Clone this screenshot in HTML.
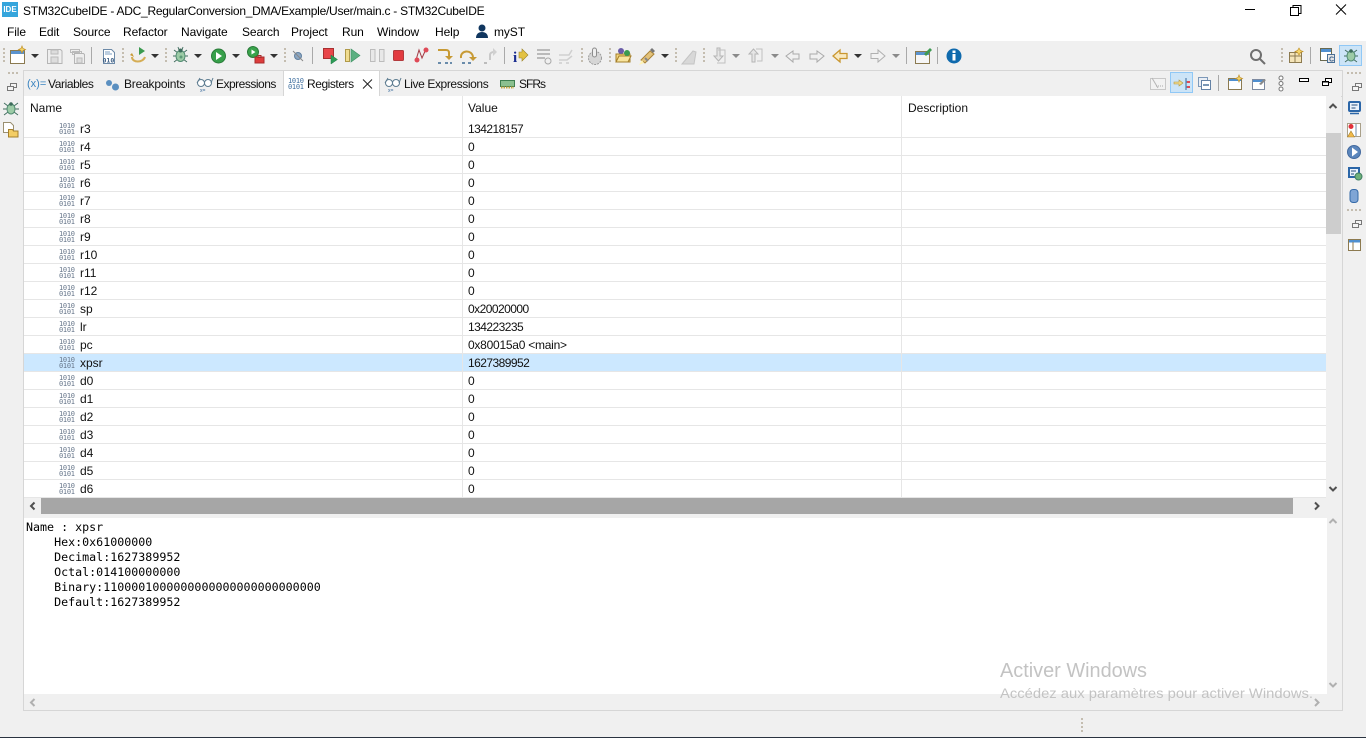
<!DOCTYPE html>
<html><head><meta charset="utf-8"><title>STM32CubeIDE</title>
<style>
html,body{margin:0;padding:0;width:1366px;height:738px;overflow:hidden;background:#f0f0f0;font:12px "Liberation Sans",sans-serif;color:#111}
.a{position:absolute;white-space:nowrap}
#title{left:0;top:0;width:1366px;height:20px;background:#fff}
#menu{left:0;top:20px;width:1366px;height:21px;background:#fff}
.m{position:absolute;top:24px;line-height:16px;color:#000;letter-spacing:-.1px}
#tabs{left:24px;top:70px;width:1318px;height:25px;background:#f0f0f0;border-top:1px solid #d6d6d6;border-bottom:1px solid #d6d6d6;box-sizing:content-box}
#tree{left:24px;top:96px;width:1302px;height:402px;background:#fff;overflow:hidden}
.r{position:absolute;left:0;width:1302px;height:17px;border-bottom:1px solid #e6e6e6;line-height:18px}
.r.s{background:#cce8ff;border-bottom-color:#e6e6e6}
.n{position:absolute;left:56px;top:0}
.v{position:absolute;left:444px;top:0;letter-spacing:-.55px}
.b{position:absolute;left:35px;top:2.500px;width:16px;font:7px/6px "DejaVu Sans Mono",monospace;color:#66768a;letter-spacing:-.3px;white-space:pre}
.t{position:absolute;top:76px;line-height:16px;color:#111;letter-spacing:-.4px}
#detail{left:24px;top:518px;width:1303px;height:176px;background:#fff}
#mono{left:26px;top:520px;font:11.66px/15px "DejaVu Sans Mono",monospace;color:#000;white-space:pre}
</style></head><body>
<div class="a" id="title"></div>
<div class="a" id="menu"></div>
<div class="a" style="left:23px;top:3px;line-height:16px;color:#000;letter-spacing:-.26px">STM32CubeIDE - ADC_RegularConversion_DMA/Example/User/main.c - STM32CubeIDE</div>
<div class="a" style="left:2px;top:2px;width:16px;height:15px;background:#35a5dc;color:#fff;font:bold 8px/15px 'Liberation Sans',sans-serif;text-align:center">IDE</div>
<span class="m" style="left:7px">File</span><span class="m" style="left:39px">Edit</span><span class="m" style="left:73px">Source</span><span class="m" style="left:123px">Refactor</span><span class="m" style="left:181px">Navigate</span><span class="m" style="left:242px">Search</span><span class="m" style="left:291px">Project</span><span class="m" style="left:342px">Run</span><span class="m" style="left:377px">Window</span><span class="m" style="left:435px">Help</span><span class="m" style="left:494px">myST</span>

<div class="a" id="tabs"></div>
<div class="a" style="left:283px;top:71px;width:97px;height:25px;background:#fff;border-left:1px solid #d6d6d6;border-right:1px solid #d6d6d6;box-sizing:border-box"></div>
<span class="t" style="left:48px">Variables</span><span class="a" style="left:27px;top:76px;line-height:16px;color:#3a84c0;font-size:11px">(x)=</span>
<span class="t" style="left:124px;letter-spacing:-.2px">Breakpoints</span><span class="t" style="left:216px;letter-spacing:-.5px">Expressions</span><span class="t" style="left:307px;letter-spacing:-.45px">Registers</span><span class="t" style="left:404px">Live Expressions</span><span class="t" style="left:519px;letter-spacing:-1px;font-size:12px">SFRs</span>
<div class="b" style="left:288px;top:78px;position:absolute;color:#3f6f9f">1010
0101</div>

<div class="a" id="tree">
<span class="a" style="left:6px;top:4px;line-height:16px">Name</span><span class="a" style="left:444px;top:4px;line-height:16px">Value</span><span class="a" style="left:884px;top:4px;line-height:16px">Description</span>
<div class="r" style="top:24px"><span class="b">1010
0101</span><span class="n">r3</span><span class="v">134218157</span></div>
<div class="r" style="top:42px"><span class="b">1010
0101</span><span class="n">r4</span><span class="v">0</span></div>
<div class="r" style="top:60px"><span class="b">1010
0101</span><span class="n">r5</span><span class="v">0</span></div>
<div class="r" style="top:78px"><span class="b">1010
0101</span><span class="n">r6</span><span class="v">0</span></div>
<div class="r" style="top:96px"><span class="b">1010
0101</span><span class="n">r7</span><span class="v">0</span></div>
<div class="r" style="top:114px"><span class="b">1010
0101</span><span class="n">r8</span><span class="v">0</span></div>
<div class="r" style="top:132px"><span class="b">1010
0101</span><span class="n">r9</span><span class="v">0</span></div>
<div class="r" style="top:150px"><span class="b">1010
0101</span><span class="n">r10</span><span class="v">0</span></div>
<div class="r" style="top:168px"><span class="b">1010
0101</span><span class="n">r11</span><span class="v">0</span></div>
<div class="r" style="top:186px"><span class="b">1010
0101</span><span class="n">r12</span><span class="v">0</span></div>
<div class="r" style="top:204px"><span class="b">1010
0101</span><span class="n">sp</span><span class="v">0x20020000</span></div>
<div class="r" style="top:222px"><span class="b">1010
0101</span><span class="n">lr</span><span class="v">134223235</span></div>
<div class="r" style="top:240px"><span class="b">1010
0101</span><span class="n">pc</span><span class="v" style="letter-spacing:-.25px">0x80015a0 &lt;main&gt;</span></div>
<div class="r s" style="top:258px"><span class="b">1010
0101</span><span class="n">xpsr</span><span class="v">1627389952</span></div>
<div class="r" style="top:276px"><span class="b">1010
0101</span><span class="n">d0</span><span class="v">0</span></div>
<div class="r" style="top:294px"><span class="b">1010
0101</span><span class="n">d1</span><span class="v">0</span></div>
<div class="r" style="top:312px"><span class="b">1010
0101</span><span class="n">d2</span><span class="v">0</span></div>
<div class="r" style="top:330px"><span class="b">1010
0101</span><span class="n">d3</span><span class="v">0</span></div>
<div class="r" style="top:348px"><span class="b">1010
0101</span><span class="n">d4</span><span class="v">0</span></div>
<div class="r" style="top:366px"><span class="b">1010
0101</span><span class="n">d5</span><span class="v">0</span></div>
<div class="r" style="top:384px"><span class="b">1010
0101</span><span class="n">d6</span><span class="v">0</span></div>
<div class="a" style="left:438px;top:0;width:1px;height:402px;background:#e6e6e6"></div>
<div class="a" style="left:877px;top:0;width:1px;height:402px;background:#e6e6e6"></div>
</div>

<!-- scrollbars -->
<div class="a" style="left:1326px;top:96px;width:15px;height:402px;background:#f0f0f0"></div>
<div class="a" style="left:1326px;top:133px;width:15px;height:101px;background:#cdcdcd"></div>
<div class="a" style="left:24px;top:498px;width:1318px;height:16px;background:#f0f0f0"></div>
<div class="a" style="left:41px;top:498px;width:1252px;height:16px;background:#a6a6a6"></div>
<div class="a" style="left:24px;top:514px;width:1318px;height:4px;background:#f0f0f0"></div>
<div class="a" id="detail"></div>
<div class="a" id="mono">Name : xpsr
    Hex:0x61000000
    Decimal:1627389952
    Octal:014100000000
    Binary:1100001000000000000000000000000
    Default:1627389952</div>
<div class="a" style="left:1342px;top:70px;width:1px;height:641px;background:#d6d6d6"></div>
<div class="a" style="left:23px;top:70px;width:1px;height:641px;background:#d6d6d6"></div>
<div class="a" style="left:23px;top:710px;width:1320px;height:1px;background:#d6d6d6"></div>
<div class="a" style="left:0;top:737px;width:1366px;height:1px;background:#2a3340"></div>

<svg class="a" style="left:0;top:0" width="1366" height="738" viewBox="0 0 1366 738" fill="none">
<!-- window controls -->
<path d="M1245 9.5h10" stroke="#000"/>
<path d="M1290.500 7.500h8v8h-8zM1293 7.500V5.500h8v8h-2.500" stroke="#000"/>
<path d="M1336 4.500l10 10M1346 4.500l-10 10" stroke="#000"/>
<!-- myST person -->
<circle cx="482" cy="28" r="3.500" fill="#10365f"/><path d="M476 38c0-4 2.500-6 6-6s6 2 6 6z" fill="#10365f"/>

<!-- grips -->
<g fill="#c4bdb0">
<rect x="3" y="48" width="2" height="2"/><rect x="3" y="52" width="2" height="2"/><rect x="3" y="56" width="2" height="2"/><rect x="3" y="60" width="2" height="2"/>
<rect x="122" y="48" width="2" height="2"/><rect x="122" y="52" width="2" height="2"/><rect x="122" y="56" width="2" height="2"/><rect x="122" y="60" width="2" height="2"/>
<rect x="165" y="48" width="2" height="2"/><rect x="165" y="52" width="2" height="2"/><rect x="165" y="56" width="2" height="2"/><rect x="165" y="60" width="2" height="2"/>
<rect x="284" y="48" width="2" height="2"/><rect x="284" y="52" width="2" height="2"/><rect x="284" y="56" width="2" height="2"/><rect x="284" y="60" width="2" height="2"/>
<rect x="581" y="48" width="2" height="2"/><rect x="581" y="52" width="2" height="2"/><rect x="581" y="56" width="2" height="2"/><rect x="581" y="60" width="2" height="2"/>
<rect x="609" y="48" width="2" height="2"/><rect x="609" y="52" width="2" height="2"/><rect x="609" y="56" width="2" height="2"/><rect x="609" y="60" width="2" height="2"/>
<rect x="675" y="48" width="2" height="2"/><rect x="675" y="52" width="2" height="2"/><rect x="675" y="56" width="2" height="2"/><rect x="675" y="60" width="2" height="2"/>
<rect x="703" y="48" width="2" height="2"/><rect x="703" y="52" width="2" height="2"/><rect x="703" y="56" width="2" height="2"/><rect x="703" y="60" width="2" height="2"/>
<rect x="1281" y="48" width="2" height="2"/><rect x="1281" y="52" width="2" height="2"/><rect x="1281" y="56" width="2" height="2"/><rect x="1281" y="60" width="2" height="2"/>
<rect x="8" y="72" width="2" height="2"/><rect x="12" y="72" width="2" height="2"/><rect x="16" y="72" width="2" height="2"/>
<rect x="1347" y="72" width="2" height="2"/><rect x="1351" y="72" width="2" height="2"/><rect x="1355" y="72" width="2" height="2"/><rect x="1359" y="72" width="2" height="2"/>
<rect x="1347" y="209" width="2" height="2"/><rect x="1351" y="209" width="2" height="2"/><rect x="1355" y="209" width="2" height="2"/><rect x="1359" y="209" width="2" height="2"/>
<rect x="1081" y="718" width="2" height="2"/><rect x="1081" y="722" width="2" height="2"/><rect x="1081" y="726" width="2" height="2"/><rect x="1081" y="730" width="2" height="2"/>
</g>
<!-- separators -->
<g stroke="#a9a9a9"><path d="M91.500 47v17M312.500 47v17M504.500 47v17M906.500 47v17M937.500 47v17M1310.500 47v17M1218.500 75v16"/></g>
<!-- dropdown arrows -->
<g fill="#333"><path d="M31 54h8l-4 4zM151 54h8l-4 4zM194 54h8l-4 4zM232 54h8l-4 4zM270 54h8l-4 4zM661 54h8l-4 4zM854 54h8l-4 4z"/></g>
<g fill="#8a8a8a"><path d="M732 54h8l-4 4zM771 54h8l-4 4zM892 54h8l-4 4z"/></g>

<!-- new -->
<rect x="10.500" y="50.500" width="14" height="13" fill="#fff" stroke="#8b7a50"/><rect x="11" y="51" width="13" height="3" fill="#5b93cf"/><path d="M22 46l1 2.500 2.500 1-2.500 1-1 2.500-1-2.500-2.500-1 2.500-1z" fill="#f5d56a" stroke="#c2932a" stroke-width=".7"/>
<!-- save / save all -->
<path d="M47.500 49.500h13l1.500 1.500v12.500h-14.500z" fill="#eee" stroke="#b5b5b5"/><rect x="51" y="50" width="7" height="4" fill="#ddd" stroke="#bbb"/><rect x="51" y="57" width="7" height="6" fill="#ddd" stroke="#bbb"/>
<path d="M70.500 49.500h9v3h-9zM72.500 51.500h9v3h-9z" fill="#eee" stroke="#bbb"/><path d="M74.500 53.500h9l1 1v9h-10z" fill="#eee" stroke="#b5b5b5"/><rect x="77" y="58" width="5" height="5" fill="#ddd" stroke="#bbb"/>
<!-- binary file -->
<path d="M103.500 49.500h8l3 3v11h-11z" fill="#fff" stroke="#6d8aa8"/><path d="M105 52h5M105 54h7" stroke="#7a9cc0"/><text x="102.500" y="62.500" font-family="DejaVu Sans Mono,monospace" font-size="6.500" font-weight="bold" fill="#3e5f85">010</text>
<!-- debug-config icon -->
<path d="M132 57c0 6 11 6 13 0" stroke="#d5ad55" stroke-width="2"/><path d="M130 55l2-2 2 4z" fill="#c89a35"/><path d="M139 47v8l6-4z" fill="#3a9a4f"/>
<!-- bug -->
<g stroke="#3f6b5d" stroke-width=".9"><path d="M174 50l4 3M187 50l-4 3M173 56h5M188 56h-5M174 62l4-3M187 62l-4-3M178 47l1 3M183 47l-1 3"/></g><ellipse cx="180.500" cy="56" rx="4.500" ry="5.500" fill="#9ccba6" stroke="#4f8a70"/><circle cx="180.500" cy="50.500" r="2" fill="#3d6c5c"/><circle cx="181" cy="57" r="1.500" fill="#5e9a78"/>
<!-- run -->
<circle cx="218.500" cy="56" r="7" fill="#37a04a" stroke="#2a7b3a"/><path d="M216 52v8l6-4z" fill="#fff"/>
<!-- external tools -->
<circle cx="253" cy="52" r="5.500" fill="#3aa34c" stroke="#2a7b3a"/><path d="M251.500 49.500v5l4-2.500z" fill="#fff"/><rect x="255" y="57" width="9" height="6" fill="#dd3c3c" stroke="#a92b2b"/><rect x="258" y="55.500" width="3" height="2" stroke="#a92b2b"/>
<!-- skip bp -->
<circle cx="298" cy="56" r="3.500" fill="#8ba6c2" stroke="#5f7f9f"/><path d="M293 51l10 10" stroke="#888"/>
<!-- restart -->
<rect x="323.500" y="48.500" width="10" height="10" fill="#e8464a" stroke="#a83030"/><path d="M331 55v9l6.500-4.500z" fill="#2e9b57" stroke="#1f7c44" stroke-width=".5"/>
<!-- resume -->
<rect x="345.500" y="49.500" width="4" height="12" fill="#f0dc90" stroke="#b09a4a"/><path d="M351 49v13l9-6.500z" fill="#5bb081" stroke="#3f9163" stroke-width=".6"/>
<!-- suspend -->
<rect x="370.500" y="49.500" width="4.500" height="12" fill="#e8e8e8" stroke="#bcbcbc"/><rect x="379.500" y="49.500" width="4.500" height="12" fill="#e8e8e8" stroke="#bcbcbc"/>
<!-- terminate -->
<rect x="393.500" y="50.500" width="10" height="10" rx="1" fill="#e23b40" stroke="#b33a3d"/>
<!-- disconnect -->
<path d="M416 60l3-10 3 8 4-9" stroke="#a33b45"/><circle cx="417" cy="60" r="2.500" fill="#df4a57"/><circle cx="426" cy="50" r="2.500" fill="#df4a57"/>
<!-- step into -->
<path d="M438 50h8c3 0 3 2 3 3v4" stroke="#c79a35" stroke-width="2"/><path d="M445 56h8l-4 4z" fill="#c79a35"/><path d="M438 63h3M445 63h3M450 63h2" stroke="#3d6a94" stroke-width="1.500"/>
<!-- step over -->
<path d="M461 58c-1-8 11-9 12-1" stroke="#c79a35" stroke-width="2"/><path d="M469 57h8l-4 4z" fill="#c79a35"/><path d="M462 63h3M468 63h3" stroke="#3d6a94" stroke-width="1.500"/>
<!-- step return -->
<path d="M490 60v-5c0-2 2-3 4-3" stroke="#c9c9c9" stroke-width="2"/><path d="M493 48l4 4-4 4z" fill="#d0d0d0"/><path d="M484 63h3" stroke="#aaa" stroke-width="1.500"/>
<!-- instruction step -->
<text x="513" y="62" font-family="Liberation Serif,serif" font-weight="bold" font-size="15" fill="#1a2c8f">i</text><path d="M519 52h3v-3l6 6-6 6v-3h-3z" fill="#e3c243" stroke="#9d8325" stroke-width=".6"/>
<path d="M537 50h13M537 54h13M537 58h8" stroke="#a8a8a8" stroke-width="1.500"/><circle cx="548" cy="61" r="3" stroke="#a8a8a8"/>
<path d="M559 55h10l3-5M559 60h8l5-4" stroke="#cfcfcf" stroke-width="1.500"/><path d="M559 63h3M566 63h3" stroke="#bbb"/>
<!-- gear hand -->
<circle cx="595" cy="58" r="6.500" fill="#d6d6d6" stroke="#9a9a9a" stroke-dasharray="2 1"/><rect x="592.500" y="48" width="4" height="9" rx="2" fill="#eee" stroke="#8c8c8c"/>
<!-- folder -->
<path d="M616 54h14v8h-14z" fill="#f3d680" stroke="#a57f2a"/><path d="M616 62l3-6h12l-3 6z" fill="#f8e49d" stroke="#a57f2a"/><circle cx="621" cy="51" r="3" fill="#6a5ca8"/><circle cx="627" cy="53" r="3" fill="#3a9a4f"/>
<!-- pen -->
<path d="M641 60l9-9 4 3-9 9z" fill="#e3c27a" stroke="#a98236"/><path d="M650 50l2-2 3 3-2 2z" fill="#777"/><path d="M645 58l3 3" stroke="#888" stroke-width="2"/><path d="M639 65l3-5 2 3z" fill="#fff3b5"/>
<path d="M682 64l11-13 3 1-2 12z" fill="#d8d8d8" stroke="#c4c4c4"/>
<!-- nav icons -->
<path d="M717 48h3v8h3l-4.500 5-4.500-5h3z" fill="#e6e6e6" stroke="#b5b5b5"/><path d="M718 50h7v13h-8" stroke="#c0c0c0"/>
<path d="M755 62h-3v-8h-3l4.500-5 4.500 5h-3z" fill="#e6e6e6" stroke="#b5b5b5"/><path d="M756 49h6v12h-5" stroke="#c0c0c0"/>
<path d="M786 56l7-5v3h6v5h-6v3z" fill="#f0f0f0" stroke="#aaa"/>
<path d="M824 56l-7-5v3h-7v5h7v3z" fill="#f0f0f0" stroke="#aaa"/>
<path d="M833 56l7-6v3.500h7v5h-7v3.500z" fill="#f8e9c0" stroke="#c9962f" stroke-width="1.300"/>
<path d="M885 56l-7-6v3.500h-7v5h7v3.500z" fill="#f2f2f2" stroke="#b0b0b0"/>
<!-- pin editor -->
<rect x="915.500" y="51.500" width="14" height="12" fill="#f6f6f6" stroke="#8b7a50"/><rect x="916" y="52" width="13" height="3" fill="#5b93cf"/><path d="M924 54l6-6 2 2-6 6z" fill="#3f9a52"/>
<!-- info -->
<circle cx="954" cy="56" r="7.500" fill="#0f6aad"/><rect x="952.500" y="54" width="3" height="6.500" fill="#fff"/><rect x="952.500" y="50.500" width="3" height="2.500" fill="#fff"/>
<!-- search -->
<circle cx="1256" cy="55" r="5" stroke="#6f6f6f" stroke-width="2"/><path d="M1260 59l5 5" stroke="#6f6f6f" stroke-width="2"/>
<!-- perspective icons -->
<rect x="1289.500" y="52.500" width="12" height="10" fill="#f4e4b8" stroke="#8c7a50"/><path d="M1289 56h13M1295 52v11" stroke="#8c7a50"/><path d="M1299 48l1.500 2.500 2.500 1-2.500 1-1.500 2.500-1.500-2.500-2.500-1 2.500-1z" fill="#f5d56a" stroke="#c2932a" stroke-width=".7"/>
<rect x="1320.500" y="48.500" width="11" height="12" fill="#fff" stroke="#6a6a50"/><rect x="1321" y="49" width="10" height="3" fill="#4f8fd0"/><rect x="1327.500" y="54.500" width="7" height="8" fill="#e6e6e6" stroke="#496f96"/><text x="1329" y="61.500" font-family="Liberation Sans,sans-serif" font-size="7" font-weight="bold" fill="#3a5f88">C</text>
<rect x="1339.500" y="45.500" width="22" height="20" fill="#cce4f7" stroke="#90c8f6"/>
<g stroke="#3f6b5d" stroke-width=".9"><path d="M1345 50l4 3M1357 50l-4 3M1344 56h5M1358 56h-5M1345 62l4-3M1357 62l-4-3"/></g><ellipse cx="1351" cy="56" rx="4" ry="5" fill="#9ccba6" stroke="#4f8a70"/><circle cx="1351" cy="51" r="1.800" fill="#3d6c5c"/>

<!-- tab icons -->
<circle cx="109" cy="83" r="3" fill="#5a8fc0"/><circle cx="115.500" cy="87" r="3.500" fill="#5a8fc0"/>
<g stroke="#5d7c90" fill="#fff"><circle cx="201" cy="83" r="3.500"/><circle cx="208" cy="83" r="3.500"/></g><path d="M197 83l3-5M205 83h-1M211 83l2-5" stroke="#5d7c90"/><text x="200" y="92" font-size="5" font-family="Liberation Sans,sans-serif" fill="#3f6f9f">x=</text>
<g stroke="#5d7c90" fill="#fff"><circle cx="389" cy="83" r="3.500"/><circle cx="396" cy="83" r="3.500"/></g><path d="M385 83l3-5M399 83l2-5" stroke="#5d7c90"/><text x="388" y="92" font-size="5" font-family="Liberation Sans,sans-serif" fill="#3f6f9f">x=</text>
<path d="M363 79.500l9 9M372 79.500l-9 9" stroke="#222"/>
<rect x="500.500" y="80.500" width="14" height="6" fill="#8bc08f" stroke="#3f7f50"/><path d="M501 87.500h13" stroke="#c2a33a" stroke-width="2" stroke-dasharray="1.500 1"/>

<!-- view toolbar -->
<rect x="1150.500" y="78.500" width="15" height="11" fill="#f2f2f2" stroke="#c8c8c8"/><path d="M1152 78l6 10" stroke="#b5b5b5"/><path d="M1156 86h7" stroke="#aaa" stroke-dasharray="1 1"/>
<rect x="1170.500" y="72.500" width="22" height="20" fill="#cce4f7" stroke="#90c8f6"/>
<path d="M1174 82h5v-2l4 3-4 3v-2h-5z" fill="#efd98a" stroke="#b4983f" stroke-width=".6"/><path d="M1186 78v12M1186 82h4M1186 87h4" stroke="#34689c"/><rect x="1187" y="81" width="3" height="2" fill="#df4a57"/><rect x="1187" y="86" width="3" height="2" fill="#df4a57"/>
<rect x="1198.500" y="77.500" width="9" height="9" fill="#e9eef5" stroke="#7d98b8"/><rect x="1201.500" y="80.500" width="9" height="9" fill="#fff" stroke="#6482a5"/><path d="M1203 85h6" stroke="#1f4f82" stroke-width="1.200"/>
<rect x="1228.500" y="78.500" width="13" height="11" fill="#fff" stroke="#8b7a50"/><rect x="1229" y="79" width="12" height="2" fill="#4f8fd0"/><path d="M1239 75l1 2.500 2.500 1-2.500 1-1 2.500-1-2.500-2.500-1 2.500-1z" fill="#f5d56a" stroke="#c2932a" stroke-width=".7"/>
<rect x="1252.500" y="79.500" width="12" height="10" fill="#fff" stroke="#7d8aa0"/><rect x="1253" y="80" width="11" height="2" fill="#4f8fd0"/><path d="M1259 84l5-5 2 1-5 5z" fill="#8a8a8a"/>
<g stroke="#777" fill="#fff"><circle cx="1281" cy="78" r="2"/><circle cx="1281" cy="83.500" r="2"/><circle cx="1281" cy="89" r="2"/></g>
<rect x="1299.500" y="78.500" width="9" height="3" fill="#fff" stroke="#000"/>
<rect x="1325.500" y="78.500" width="6" height="4" fill="#fff" stroke="#000"/><rect x="1322.500" y="81.500" width="6" height="4" fill="#fff" stroke="#000"/><rect x="1323" y="81" width="5" height="1.500" fill="#000"/>

<!-- left trim -->
<rect x="10.500" y="83.500" width="6" height="4" fill="#f4f4f4" stroke="#777"/><rect x="7.500" y="86.500" width="6" height="4" fill="#f4f4f4" stroke="#777"/>
<g stroke="#3f6b5d" stroke-width=".9"><path d="M4 103l4 3M18 103l-4 3M3 109h5M19 109h-5M4 115l4-3M18 115l-4-3"/></g><ellipse cx="11" cy="109" rx="4" ry="5" fill="#9ccba6" stroke="#4f8a70"/><circle cx="11" cy="104" r="1.800" fill="#3d6c5c"/>
<path d="M3.500 122.500h7l3 3v7h-10z" fill="#fff" stroke="#9a8f70"/><path d="M8.500 129.500h4l1 1.500h4.500v6h-9.500z" fill="#f3cd64" stroke="#a57f2a"/>

<!-- right trim -->
<rect x="1355.500" y="83.500" width="6" height="4" fill="#f4f4f4" stroke="#777"/><rect x="1352.500" y="86.500" width="6" height="4" fill="#f4f4f4" stroke="#777"/>
<rect x="1349" y="102" width="11" height="9" rx="1" fill="#eaf2fb" stroke="#2b66a8" stroke-width="2"/><path d="M1351.500 105h6M1351.500 108h4" stroke="#274d7c"/><path d="M1350 113.500h9" stroke="#2b66a8" stroke-width="1.500"/>
<rect x="1347.500" y="123.500" width="13" height="13" fill="#fff" stroke="#a9a08a"/><circle cx="1351" cy="126.500" r="2.500" fill="#e2303a"/><path d="M1351 131l3.500 6h-7z" fill="#f0b94a" stroke="#a57f2a" stroke-width=".6"/><path d="M1356 124v12" stroke="#6d8aa8"/>
<circle cx="1354" cy="152" r="6.500" fill="#5b86bc" stroke="#436a9f"/><path d="M1352 147.500v9l6-4.500z" fill="#fff"/>
<rect x="1349" y="168" width="10" height="9" fill="#eaf2fb" stroke="#2b66a8" stroke-width="2"/><path d="M1351 171h5M1351 174h3" stroke="#274d7c"/><ellipse cx="1358.500" cy="176.500" rx="3.500" ry="3.500" fill="#6eb07a" stroke="#3f7d62"/>
<rect x="1350" y="189.500" width="8" height="13" rx="3" fill="#7fa5d5" stroke="#356aa8"/>
<rect x="1355.500" y="220.500" width="6" height="4" fill="#f4f4f4" stroke="#777"/><rect x="1352.500" y="223.500" width="6" height="4" fill="#f4f4f4" stroke="#777"/>
<rect x="1348.500" y="239.500" width="12" height="11" fill="#fff" stroke="#8c7a50"/><rect x="1349" y="240" width="11" height="2.500" fill="#4f8fd0"/><path d="M1353 242v8" stroke="#8c7a50"/>

<!-- scroll arrows -->
<g stroke="#505050" stroke-width="2"><path d="M1329.500 108l3.500-3.500 3.500 3.500"/><path d="M1329.500 487l3.500 3.500 3.500-3.500"/><path d="M34.500 502.500l-3.500 3.500 3.500 3.500"/><path d="M1315 502.500l3.500 3.500-3.500 3.500"/></g>
<g stroke="#b0b0b0" stroke-width="2"><path d="M1329.500 523l3.500-3.500 3.500 3.500"/><path d="M1329.500 683l3.500 3.500 3.500-3.500"/><path d="M34.500 699l-3.500 3.500 3.500 3.500"/><path d="M1315 699l3.500 3.500-3.500 3.500"/></g>

<!-- watermark -->
<text x="1000" y="677" font-family="Liberation Sans,sans-serif" font-size="20" fill="#c3c3c3" textLength="147" lengthAdjust="spacingAndGlyphs">Activer Windows</text>
<text x="1000" y="698" font-family="Liberation Sans,sans-serif" font-size="14" fill="#c3c3c3" textLength="313" lengthAdjust="spacingAndGlyphs">Accédez aux paramètres pour activer Windows.</text>
</svg>
</body></html>
